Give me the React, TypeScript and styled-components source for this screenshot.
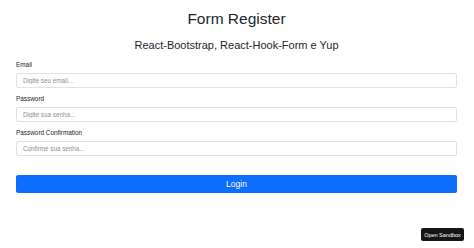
import styled, { createGlobalStyle } from 'styled-components';

const Global = createGlobalStyle`
    body {
        margin: 0;
        background: #ffffff;
        font-family: "Liberation Sans", Arial, sans-serif;
        color: #212529;
    }
`;

const Page = styled.div`
    display: flex;
    flex-direction: column;
    padding: 10px 17px 0 16px;
`;

const Titulo = styled.h1`
    margin: 0;
    font-size: 15.5px;
    line-height: 18px;
    font-weight: 400;
    text-align: center;
`;

const Subtitulo = styled.h4`
    margin: 10px 0 8px;
    font-size: 11px;
    line-height: 14px;
    font-weight: 400;
    text-align: center;
`;

const Grupo = styled.div`
    display: flex;
    flex-direction: column;
    margin-bottom: 6px;
`;

const Rotulo = styled.label`
    font-size: 6.4px;
    line-height: 9px;
    margin-bottom: 4px;
`;

const Campo = styled.input`
    box-sizing: border-box;
    height: 15px;
    width: 100%;
    padding: 0 6px;
    border: 1px solid #dee2e6;
    border-radius: 2px;
    font-family: inherit;
    font-size: 6.3px;
    color: #212529;
    outline: none;

    &::placeholder {
        color: #8a8f94;
    }
`;

const Botao = styled.button`
    margin-top: 13px;
    height: 18px;
    width: 100%;
    border: none;
    border-radius: 2px;
    background-color: #0d6efd;
    color: #ffffff;
    font-family: inherit;
    font-size: 8.5px;
    cursor: pointer;
`;

const Sandbox = styled.a`
    position: fixed;
    right: 10px;
    bottom: 7px;
    display: flex;
    align-items: center;
    justify-content: center;
    width: 43px;
    height: 13px;
    background: #151515;
    color: #ffffff;
    border-radius: 2px;
    font-size: 5.5px;
    text-decoration: none;
`;

const campos = [
    { rotulo: 'Email', tipo: 'email', dica: 'Digite seu email...' },
    { rotulo: 'Password', tipo: 'password', dica: 'Digite sua senha...' },
    { rotulo: 'Password Confirmation', tipo: 'password', dica: 'Confirme sua senha...' },
];

export default function App() {
    return (
        <>
            <Global />
            <Page>
                <Titulo>Form Register</Titulo>
                <Subtitulo>React-Bootstrap, React-Hook-Form e Yup</Subtitulo>
                {campos.map((c) => (
                    <Grupo key={c.rotulo}>
                        <Rotulo>{c.rotulo}</Rotulo>
                        <Campo type={c.tipo} placeholder={c.dica} />
                    </Grupo>
                ))}
                <Botao type="button">Login</Botao>
            </Page>
            <Sandbox>Open Sandbox</Sandbox>
        </>
    );
}
